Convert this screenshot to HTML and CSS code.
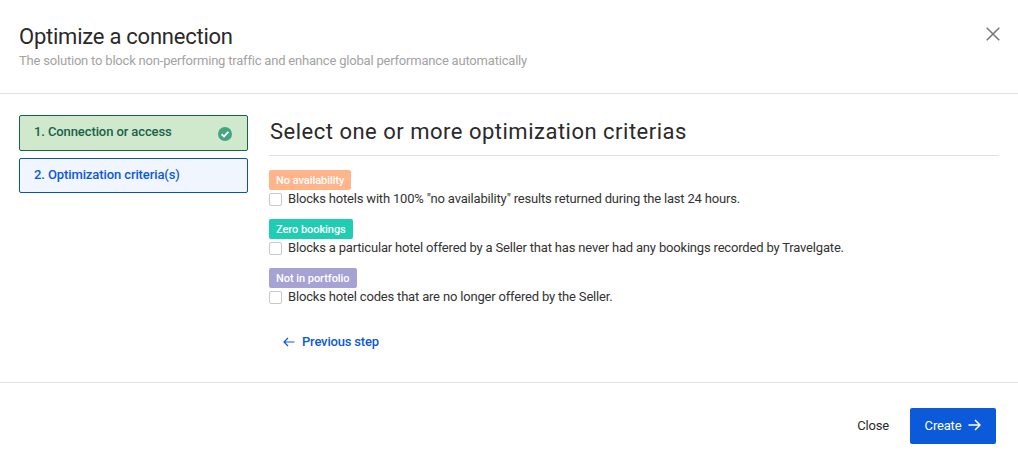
FILE: index.html
```html
<!DOCTYPE html>
<html>
<head>
    <link rel="stylesheet" href="styles.css">
</head>
<body>
    <div class="modal">
        <div class="modal-header">
            <div>
                <h1>Optimize a connection</h1>
                <p>The solution to block non-performing traffic and enhance global performance automatically</p>
            </div>
            <button class="close-icon" title="Close">
                <svg width="14" height="14" viewBox="0 0 14 14"><path d="M0.7 0.7L13.3 13.3M13.3 0.7L0.7 13.3" stroke="#757575" stroke-width="1.5" fill="none"/></svg>
            </button>
        </div>
        <div class="modal-body">
            <div class="steps">
                <div class="step step-done">
                    <span>1. Connection or access</span>
                    <svg width="14" height="14" viewBox="0 0 14 14"><circle cx="7" cy="7" r="7" fill="#43a581"/><path d="M3.6 7.2L6 9.5L10.4 4.9" stroke="#fff" stroke-width="1.9" fill="none"/></svg>
                </div>
                <div class="step step-current">
                    <span>2. Optimization criteria(s)</span>
                </div>
            </div>
            <div class="content">
                <h2>Select one or more optimization criterias</h2>
                <div class="criteria">
                    <span class="tag tag-orange">No availability</span>
                    <label><span class="box"></span>Blocks hotels with 100% "no availability" results returned during the last 24 hours.</label>
                </div>
                <div class="criteria">
                    <span class="tag tag-green">Zero bookings</span>
                    <label><span class="box"></span>Blocks a particular hotel offered by a Seller that has never had any bookings recorded by Travelgate.</label>
                </div>
                <div class="criteria">
                    <span class="tag tag-purple">Not in portfolio</span>
                    <label><span class="box"></span>Blocks hotel codes that are no longer offered by the Seller.</label>
                </div>
                <button class="prev">
                    <svg width="12" height="10" viewBox="0 0 12 10"><path d="M11.5 5H1M5 1L1 5L5 9" stroke="#0b5ad9" stroke-width="1.2" fill="none"/></svg>
                    Previous step
                </button>
            </div>
        </div>
        <div class="modal-footer">
            <button class="btn-close">Close</button>
            <button class="btn-create">
                Create
                <svg width="13" height="12" viewBox="0 0 13 12"><path d="M0.5 6H12M7 1L12 6L7 11" stroke="#fff" stroke-width="1.5" fill="none"/></svg>
            </button>
        </div>
    </div>
</body>
</html>
```

FILE: styles.css
```css
* {
    box-sizing: border-box;
    margin: 0;
    padding: 0;
}

body {
    font-family: Roboto, sans-serif;
    background-color: white;
    color: #212121;
}

button {
    font-family: Roboto, sans-serif;
    background: none;
    border: none;
    cursor: pointer;
}

.modal {
    width: 1018px;
    height: 465px;
    overflow: hidden;
}

.modal-header {
    display: flex;
    justify-content: space-between;
    height: 94px;
    padding: 23px 18px 0 19px;
    border-bottom: 1px solid #e0e0e0;
}

.modal-header h1 {
    font-size: 22px;
    font-weight: 400;
    line-height: 28px;
    letter-spacing: -0.24px;
    color: #2a2a2a;
}

.modal-header p {
    font-size: 13px;
    line-height: 16px;
    margin-top: 2px;
    color: #a3a3a3;
    letter-spacing: -0.2px;
}

.close-icon {
    width: 14px;
    height: 14px;
    margin-top: 4px;
}

.modal-body {
    display: flex;
    height: 289px;
    padding: 21px 19px 0 19px;
    border-bottom: 1px solid #e0e0e0;
}

.steps {
    width: 229px;
    margin-right: 21px;
    display: flex;
    flex-direction: column;
    gap: 7px;
}

.step {
    display: flex;
    justify-content: space-between;
    height: 36px;
    padding: 7px 15px 0 14px;
    border-radius: 2px;
    font-size: 13px;
    font-weight: 500;
    line-height: 18px;
    letter-spacing: -0.1px;
}

.step svg {
    margin-top: 4px;
}

.step-done {
    background-color: #d0e8cb;
    border: 1px solid #17634a;
    color: #17634a;
}

.step-current {
    height: 35px;
    background-color: #f1f5fe;
    border: 1px solid #0b52b8;
    color: #0b5ad9;
}

.content {
    flex: 1;
}

.content h2 {
    font-size: 22px;
    font-weight: 400;
    line-height: 34px;
    letter-spacing: 0.5px;
    height: 41px;
    padding-left: 1px;
    border-bottom: 1px solid #e0e0e0;
    color: #2a2a2a;
}

.criteria {
    margin-top: 11px;
}

.content h2 + .criteria {
    margin-top: 14px;
}

.tag {
    display: block;
    width: fit-content;
    height: 20px;
    padding: 1px 7px 0;
    border-radius: 2px;
    font-size: 11px;
    font-weight: 500;
    line-height: 19px;
    letter-spacing: -0.05px;
    color: white;
}

.tag-orange {
    background-color: #ffb48a;
}

.tag-green {
    background-color: #1fcdb2;
}

.tag-purple {
    background-color: #a6a2d4;
}

.criteria label {
    display: flex;
    align-items: center;
    height: 18px;
    font-size: 13px;
    line-height: 18px;
    letter-spacing: -0.18px;
    color: #333;
}

.box {
    width: 13px;
    height: 13px;
    margin-right: 6px;
    margin-top: 1px;
    background: white;
    border: 1px solid #c9c9c9;
    border-radius: 2px;
}

.prev {
    display: flex;
    align-items: center;
    gap: 7px;
    margin: 27px 0 0 14px;
    font-size: 13px;
    font-weight: 500;
    line-height: 18px;
    letter-spacing: -0.18px;
    color: #0b5ad9;
}

.modal-footer {
    display: flex;
    justify-content: flex-end;
    align-items: center;
    gap: 21px;
    padding: 25px 22px 0 0;
}

.btn-close {
    padding-bottom: 2px;
    font-size: 13px;
    letter-spacing: -0.18px;
    color: #2a2a2a;
}

.btn-create {
    display: flex;
    align-items: center;
    justify-content: center;
    gap: 7px;
    width: 86px;
    height: 36px;
    padding-bottom: 2px;
    background-color: #0b5ad9;
    border-radius: 2px;
    font-size: 13px;
    letter-spacing: -0.18px;
    color: white;
}
```
